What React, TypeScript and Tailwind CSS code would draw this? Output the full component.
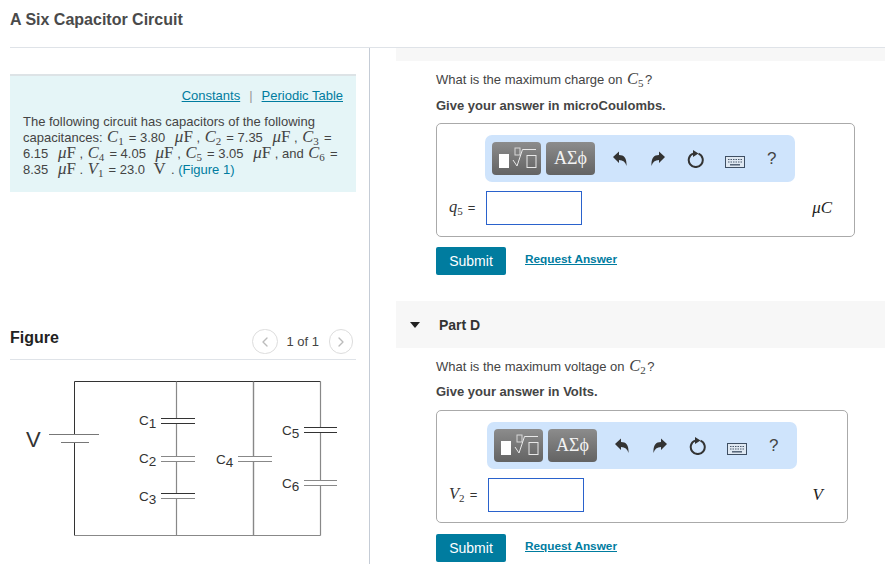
import type { ReactNode } from "react";
import { ChevronLeft, ChevronRight } from "lucide-react";

function M({ v, sub }: { v: string; sub?: string }) {
  return (
    <span className="ml-[1px] mr-[1.5px] font-['Liberation_Serif',serif] text-[16.5px] leading-[0]">
      <i>{v}</i>
      {sub && <span className="relative top-[3px] text-[11px] leading-[0]">{sub}</span>}
    </span>
  );
}

function MicroF() {
  return (
    <span className="ml-[6px] font-['Liberation_Serif',serif] text-[17px] leading-[0]">
      <i>μ</i>F
    </span>
  );
}

function Toolbar() {
  return (
    <div className="flex h-[47px] w-[310px] items-center rounded-[7px] bg-[#cfe4fc] pl-[7px]">
      <div className="h-[33px] w-[49px] rounded-[4px] bg-gradient-to-b from-[#8c8c8c] to-[#636363]">
        <svg width="49" height="33" viewBox="0 0 49 33" fill="none">
          <rect x="7" y="12" width="10" height="14" fill="#fff" />
          <rect x="23" y="6" width="5" height="7" stroke="#d8d8d8" />
          <path d="M21 18 L25 24 L30.5 7.5 H44" stroke="#e8e8e8" />
          <rect x="35" y="13.5" width="9" height="12" stroke="#e8e8e8" />
        </svg>
      </div>
      <div className="ml-[5px] flex h-[33px] w-[49px] items-center justify-center rounded-[4px] bg-gradient-to-b from-[#8c8c8c] to-[#636363] font-['Liberation_Serif',serif] text-[18px] text-[#f2f2f2]">
        ΑΣϕ
      </div>
      <svg className="ml-[18px]" width="14" height="15" viewBox="0 0 14 15" fill="#333">
        <path d="M0 6 L6 0.5 V4 C11 4 14 7 13.5 15 C12.5 11 10 9 6 9 V12 Z" />
      </svg>
      <svg className="ml-[24px]" width="14" height="15" viewBox="0 0 14 15" fill="#333">
        <path d="M14 6 L8 0.5 V4 C3 4 0 7 0.5 15 C1.5 11 4 9 8 9 V12 Z" />
      </svg>
      <svg className="ml-[22px]" width="18" height="18" viewBox="0 0 18 18" fill="none">
        <path d="M11.5 3.6 A7 7 0 1 1 6 3.6" stroke="#333" strokeWidth="2" />
        <path d="M6 0 L11.5 3.4 L6 7 Z" fill="#333" />
      </svg>
      <svg className="ml-[20px] mt-[6px]" width="20" height="12" viewBox="0 0 20 12" fill="none">
        <rect x="0.5" y="0.5" width="19" height="11" fill="#dfe8f2" stroke="#3f4f63" />
        <path d="M3 3.5 H17 M3 6 H17" stroke="#4a5a6e" strokeDasharray="1.5 1" />
        <path d="M5 8.8 H15" stroke="#4a5a6e" strokeWidth="1.4" />
      </svg>
      <span className="ml-[22px] font-['Liberation_Sans',sans-serif] text-[17px] text-[#444]">?</span>
    </div>
  );
}

function AnswerBox(props: {
  width: string;
  height: string;
  toolbarPad: string;
  labelW: string;
  label: ReactNode;
  unit: ReactNode;
  unitPad: string;
}) {
  return (
    <div className={`rounded-[5px] border border-[#aaa] pt-[11px] ${props.width} ${props.height}`}>
      <div className={props.toolbarPad}>
        <Toolbar />
      </div>
      <div className="mt-[9px] flex items-center pl-[11px]">
        <div className={`shrink-0 text-[13px] text-[#333] ${props.labelW}`}>{props.label}</div>
        <div className="h-[34px] w-[96px] border-[1.5px] border-[#2a62cc]" />
        <div className={`ml-auto font-['Liberation_Serif',serif] text-[17px] italic text-[#222] ${props.unitPad}`}>
          {props.unit}
        </div>
      </div>
    </div>
  );
}

function SubmitRow() {
  return (
    <div className="flex items-center">
      <button className="h-[28px] w-[70px] rounded-[2px] bg-[#007c9f] text-[14px] text-white">Submit</button>
      <a className="ml-[19px] -translate-y-[1px] text-[11.8px] font-bold text-[#007c9f] underline">Request Answer</a>
    </div>
  );
}

function Circuit() {
  const dark = "#333";
  const mid = "#888";
  const plate = (x1: number, x2: number, y: number, color = "#555") => (
    <line x1={x1} x2={x2} y1={y} y2={y} stroke={color} />
  );
  const label = (x: number, y: number, n: string) => (
    <text x={x} y={y} fontSize="13.5" fill="#333">
      C<tspan dy="3">{n}</tspan>
    </text>
  );
  return (
    <svg width="346" height="204" viewBox="10 360 346 204" fill="none" className="font-['Liberation_Sans',sans-serif]">
      <path d="M74.5 434.5 V381.5 H320.5" stroke={dark} />
      <path d="M74.5 442.5 V535.5" stroke={dark} />
      <path d="M74.5 535.5 H320.5" stroke={mid} strokeWidth="1.2" />
      <path d="M176.5 381.5 V419 M176.5 424 V456 M176.5 461 V493 M176.5 499 V535.5" stroke={mid} strokeWidth="1.2" />
      <path d="M253.5 381.5 V456 M253.5 461 V535.5" stroke={mid} strokeWidth="1.4" />
      <path d="M320.5 381.5 V427 M320.5 432 V480 M320.5 486 V535.5" stroke={mid} strokeWidth="1.2" />
      {plate(49, 99, 434.5, "#777")}
      {plate(61, 89, 442.5, "#777")}
      {plate(161, 195, 418.5, dark)}
      {plate(161, 195, 423.5, dark)}
      {plate(161, 195, 456.5, mid)}
      {plate(161, 195, 461.5, mid)}
      {plate(161, 195, 493.5, dark)}
      {plate(161, 195, 498.5, mid)}
      {plate(238, 272, 456.5, mid)}
      {plate(238, 272, 461.5, mid)}
      {plate(304, 337, 427.5, dark)}
      {plate(304, 337, 432.5, dark)}
      {plate(304, 337, 480.5, mid)}
      {plate(304, 337, 485.5, mid)}
      <text x="26" y="447" fontSize="22" fill="#333">V</text>
      {label(139, 425, "1")}
      {label(139, 463, "2")}
      {label(139, 501, "3")}
      {label(216, 464, "4")}
      {label(282, 435, "5")}
      {label(282, 488, "6")}
    </svg>
  );
}

export default function App() {
  return (
    <div className="h-[564px] w-[885px] overflow-hidden bg-white font-['Liberation_Sans',sans-serif] text-[#333]">
      <div className="ml-[10px] flex h-[48px] items-start border-b border-[#dfe3e8] pt-[10px]">
        <h1 className="text-[16px] leading-[19px] font-bold text-[#4a4a4a]">A Six Capacitor Circuit</h1>
      </div>

      <div className="flex">
        {/* left column with the intro panel and figure */}
        <div className="h-[516px] w-[370px] shrink-0 border-r border-[#c5ccd6] pl-[10px]">
          <div className="mt-[26px] h-[118px] w-[346px] border-t-2 border-[#dde3e6] bg-[#e5f5f7] pl-[13px] pr-[13px] pt-[11px]">
            <div className="flex justify-end text-[13px] leading-[18px] text-[#007c9f]">
              <a className="underline">Constants</a>
              <span className="mx-[9px] text-[#999]">|</span>
              <a className="underline">Periodic Table</a>
            </div>
            <p className="mt-[9px] text-[13px] leading-[16px] text-[#444]">
              The following circuit has capacitors of the following capacitances: <M v="C" sub="1" /> = 3.80 <MicroF /> , <M v="C" sub="2" /> = 7.35 <MicroF /> , <M v="C" sub="3" /> = 6.15 <MicroF /> , <M v="C" sub="4" /> = 4.05 <MicroF /> , <M v="C" sub="5" /> = 3.05 <MicroF /> , and <M v="C" sub="6" /> = 8.35 <MicroF /> . <M v="V" sub="1" /> = 23.0 <span className="mx-[5px] font-['Liberation_Serif',serif] text-[17px] leading-[0]">V</span>. <span className="text-[#007c9f]">(Figure 1)</span>
            </p>
          </div>

          <div className="mt-[134px] flex h-[34px] w-[346px] items-center border-b border-[#dfe3e8] pr-[3px]">
            <h2 className="-translate-y-[5px] text-[16px] font-bold text-[#222]">Figure</h2>
            <div className="ml-auto flex -translate-y-[1px] items-center">
              <span className="flex h-[25px] w-[26px] items-center justify-center rounded-full border border-[#ddd] text-[#bbb]">
                <ChevronLeft size={16} />
              </span>
              <span className="ml-[8px] mr-[10px] text-[13px] text-[#444]">1 of 1</span>
              <span className="flex h-[25px] w-[24px] items-center justify-center rounded-full border border-[#ddd] text-[#bbb]">
                <ChevronRight size={16} />
              </span>
            </div>
          </div>
          <Circuit />
        </div>

        {/* right column with the two parts */}
        <div className="min-w-0 flex-1 pl-[26px]">
          <div className="h-[13px] bg-[#f7f7f7]" />
          <div className="pl-[40px]">
            <p className="mt-[8px] h-[20px] text-[13px] leading-[20px] text-[#444] translate-y-[1px]">
              What is the maximum charge on <M v="C" sub="5" />?
            </p>
            <p className="mt-[6px] h-[20px] text-[13px] leading-[20px] font-bold text-[#444] translate-y-[1px]">Give your answer in microCoulombs.</p>
            <div className="mt-[8px]">
              <AnswerBox
                width="w-[419px]"
                height="h-[114px]"
                toolbarPad="pl-[48px]"
                labelW="w-[38px]"
                label={<span><M v="q" sub="5" /> =</span>}
                unit="μC"
                unitPad="pr-[22px]"
              />
            </div>
            <div className="mt-[10px]">
              <SubmitRow />
            </div>
          </div>

          <div className="mt-[26px] flex h-[47px] items-center bg-[#f7f7f7] pl-[14px]">
            <span className="h-0 w-0 border-x-[5px] border-t-[6px] border-x-transparent border-t-[#222]" />
            <span className="ml-[19px] translate-y-[1px] text-[14px] font-bold text-[#333]">Part D</span>
          </div>

          <div className="pl-[40px]">
            <p className="mt-[8px] h-[20px] text-[13px] leading-[20px] text-[#444] translate-y-[1px]">
              What is the maximum voltage on <M v="C" sub="2" />?
            </p>
            <p className="mt-[5px] h-[20px] text-[13px] leading-[20px] font-bold text-[#444] translate-y-[1px]">Give your answer in Volts.</p>
            <div className="mt-[9px]">
              <AnswerBox
                width="w-[412px]"
                height="h-[113px]"
                toolbarPad="pl-[50px]"
                labelW="w-[40px]"
                label={<span><M v="V" sub="2" /> =</span>}
                unit="V"
                unitPad="pr-[24px]"
              />
            </div>
            <div className="mt-[11px]">
              <SubmitRow />
            </div>
          </div>
        </div>
      </div>
    </div>
  );
}
